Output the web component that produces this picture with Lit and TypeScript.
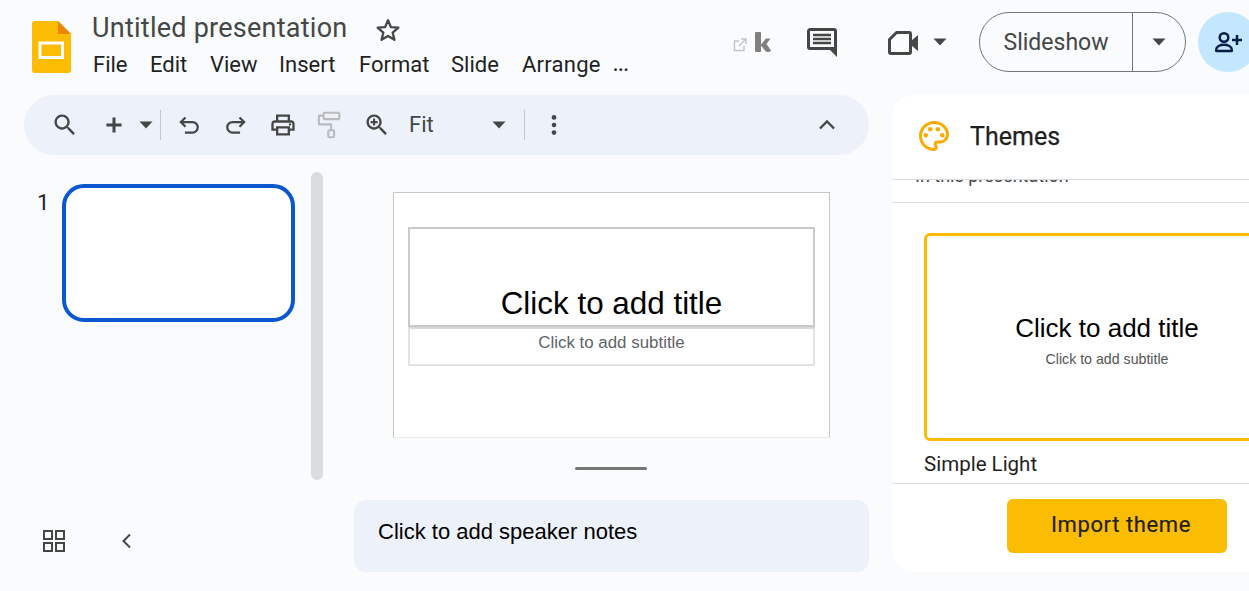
import { LitElement, html, css, svg } from "lit";
import { customElement } from "lit/decorators.js";

const icon = (size: number, content: unknown, vb = "0 0 24 24", cls = "") =>
  html`<svg class="ic ${cls}" width=${size} height=${size} viewBox=${vb} aria-hidden="true">${content}</svg>`;

const SEARCH = "M15.5 14h-.79l-.28-.27C15.41 12.59 16 11.11 16 9.5 16 5.91 13.09 3 9.5 3S3 5.91 3 9.5 5.91 16 9.5 16c1.61 0 3.09-.59 4.23-1.57l.27.28v.79l5 4.99L20.49 19l-4.99-5zm-6 0C7.01 14 5 11.99 5 9.5S7.01 5 9.5 5 14 7.01 14 9.5 11.99 14 9.5 14z";
const PRINT = "M19 8h-1V3H6v5H5c-1.66 0-3 1.34-3 3v6h4v4h12v-4h4v-6c0-1.66-1.34-3-3-3zM8 5h8v3H8V5zm8 12v2H8v-4h8v2zm2-2v-2H6v2H4v-4c0-.55.45-1 1-1h14c.55 0 1 .45 1 1v4h-2z";
const PALETTE = "M12 22C6.49 22 2 17.51 2 12S6.49 2 12 2s10 4.04 10 9c0 3.31-2.69 6-6 6h-1.77c-.28 0-.5.22-.5.5 0 .12.05.23.13.33.41.47.64 1.06.64 1.67 0 1.38-1.12 2.5-2.5 2.5zm0-18c-4.41 0-8 3.59-8 8s3.59 8 8 8c.28 0 .5-.22.5-.5 0-.16-.08-.28-.14-.35-.41-.46-.63-1.05-.63-1.65 0-1.38 1.12-2.5 2.5-2.5H16c2.21 0 4-1.79 4-4 0-3.86-3.59-7-8-7z";

const caret = () => html`<svg class="caret" width="16" height="8" viewBox="0 0 16 8" aria-hidden="true"><path d="M1.5 0.5h13L8 7.5z" fill="#444746"/></svg>`;

@customElement("app-root")
export class AppRoot extends LitElement {
  static styles = css`
    :host { display: block; width: 1249px; height: 591px; overflow: hidden; background: #f9fbfd; font-family: Roboto, "Liberation Sans", sans-serif; color: #1f1f1f; }
    .ic, .caret { display: block; flex-shrink: 0; }

    .header { display: flex; height: 95px; padding-left: 32px; box-sizing: border-box; width: 1249px; overflow: hidden; }
    .logo { margin-top: 21px; flex-shrink: 0; }
    .titles { width: 620px; margin-left: 21px; padding-top: 10px; flex-shrink: 0; }
    .title-row { display: flex; align-items: center; height: 36px; }
    .doc-title { font-size: 27px; color: #444746; line-height: 36px; letter-spacing: 0.25px; }
    .star { margin-left: 27px; margin-top: 4px; }
    .menu { display: flex; margin-top: 4px; height: 30px; align-items: center; font-size: 22px; line-height: 30px; color: #1f1f1f; padding-left: 1px; }
    .menu span { white-space: nowrap; }
    .m-file { width: 57px; } .m-edit { width: 60px; } .m-view { width: 69px; } .m-insert { width: 80px; }
    .m-format { width: 92px; } .m-slide { width: 71px; } .m-arrange { width: 91px; letter-spacing: 0.25px; }
    .m-more { font-weight: 700; font-size: 18px; }

    .cluster { display: flex; align-items: center; height: 60px; margin-top: 12px; flex-shrink: 0; }
    .ext { margin-left: 21px; margin-top: 6px; }
    .k { margin-left: 8px; }
    .comment { margin-left: 36px; margin-top: 2px; }
    .video { margin-left: 51px; margin-top: 2px; }
    .v-caret { margin-left: 14px; }
    .slideshow { display: flex; margin-left: 31px; width: 207px; height: 60px; box-sizing: border-box; border: 1px solid #747775; border-radius: 30px; flex-shrink: 0; }
    .ss-main { width: 153px; display: flex; align-items: center; justify-content: center; border-right: 1px solid #747775; font-size: 23px; color: #444746; box-sizing: border-box; }
    .ss-drop { flex: 1; display: flex; align-items: center; justify-content: center; }
    .avatar { width: 60px; height: 60px; border-radius: 50%; background: #c2e7ff; margin-left: 12px; flex-shrink: 0; display: flex; align-items: center; padding-left: 17px; box-sizing: border-box; }

    .main { display: flex; height: 477px; }
    .left { width: 845px; margin-left: 24px; flex-shrink: 0; }
    .toolbar { display: flex; align-items: center; height: 60px; border-radius: 30px; background: #edf2fa; padding: 0 28px 0 27px; box-sizing: border-box; }
    .t-add { margin-left: 21px; }
    .t-caret1 { margin-left: 10px; }
    .sep { width: 1px; height: 30px; background: #c7c7c7; flex-shrink: 0; }
    .sep1 { margin-left: 6px; }
    .t-undo { margin-left: 14px; }
    .t-tool { margin-left: 19px; }
    .fit { width: 82px; margin-left: 18px; font-size: 22px; color: #444746; box-sizing: border-box; padding-bottom: 2px; }
    .sep2 { margin-left: 17px; }
    .t-dots { margin-left: 15px; }
    .t-collapse { margin-left: auto; }

    .work { display: flex; height: 417px; }
    .strip { display: grid; grid-template-columns: 287px 12px; grid-template-rows: 325px 92px; width: 330px; flex-shrink: 0; }
    .thumbs { display: flex; padding: 29px 0 0 13px; }
    .num { width: 25px; font-size: 22px; line-height: 36px; color: #1f1f1f; margin-top: 1px; }
    .thumb { width: 233px; height: 138px; box-sizing: border-box; background: #fff; border: 4px solid #0b57d0; border-radius: 22px; }
    .scroll { width: 12px; height: 308px; margin-top: 17px; background: #dadce0; border-radius: 6px; }
    .strip-foot { grid-column: 1 / 3; display: flex; align-items: center; padding: 30px 0 0 18px; box-sizing: border-box; height: 92px; gap: 48px; }

    .editor { width: 515px; flex-shrink: 0; }
    .slide { width: 437px; height: 246px; margin: 37px 0 0 39px; box-sizing: border-box; background: #fff; border: 1px solid #c7c7c7; border-bottom-color: #e9eaed; padding: 34px 0 0 14px; font-family: "Liberation Sans", Arial, sans-serif; }
    .ph-title { width: 407px; height: 100px; box-sizing: border-box; border: 2px solid #c9c9c9; text-align: center; font-size: 31.4px; line-height: 38px; color: #000; padding-top: 56px; }
    .ph-sub { width: 407px; height: 39px; box-sizing: border-box; border: 2px solid #e3e3e3; border-top-color: #d9d9d9; text-align: center; font-size: 16.9px; line-height: 26px; color: #5f6368; padding-top: 1px; }
    .handle { width: 72px; height: 3px; background: #747775; border-radius: 2px; margin: 29px 0 0 221px; }
    .notes { height: 72px; margin-top: 30px; background: #edf2fa; border-radius: 12px; padding-left: 24px; display: flex; align-items: center; box-sizing: border-box; font: 22px/32px "Liberation Sans", Arial, sans-serif; color: #000; padding-bottom: 8px; }

    .panel { width: 357px; margin-left: 23px; flex-shrink: 0; background: #fff; border-radius: 22px 0 0 22px; overflow: hidden; display: flex; flex-direction: column; }
    .p-head { height: 85px; box-sizing: border-box; border-bottom: 1px solid #dadce0; display: flex; align-items: center; padding: 0 0 2px 24px; }
    .p-title { font-size: 25px; font-weight: 400; margin-left: 18px; color: #1f1f1f; letter-spacing: 0.05px; -webkit-text-stroke: 0.25px #1f1f1f; }
    .p-section { height: 23px; box-sizing: border-box; border-bottom: 1px solid #dadce0; overflow: hidden; padding-left: 23px; }
    .p-section div { margin-top: -16px; font-size: 18px; line-height: 24px; color: #444746; }
    .p-body { height: 281px; box-sizing: border-box; border-bottom: 1px solid #dadce0; padding: 30px 0 0 32px; overflow: hidden; }
    .card { width: 366px; height: 208px; box-sizing: border-box; border: 3px solid #fbbc04; border-radius: 6px; padding-top: 77px; text-align: center; font-family: "Liberation Sans", Arial, sans-serif; color: #000; }
    .c-title { font-size: 26px; line-height: 30px; }
    .c-sub { font-size: 14.2px; line-height: 20px; margin-top: 6px; color: #555; }
    .label { margin-top: 6px; font-size: 20.5px; line-height: 34px; color: #1f1f1f; }
    .p-foot { display: flex; justify-content: flex-end; padding: 15px 22px 0 0; }
    .import { width: 220px; height: 54px; border-radius: 6px; background: #fbbc04; display: flex; align-items: center; justify-content: center; font-size: 22px; font-weight: 400; color: #1f1f1f; letter-spacing: 0.6px; padding: 0 0 3px 8px; box-sizing: border-box; -webkit-text-stroke: 0.2px #1f1f1f; }
  `;

  render() {
    const dark = "#444746";
    return html`
      <div class="header">
        <svg class="logo" width="39" height="52" viewBox="0 0 39 52" aria-hidden="true">
          <path d="M3 0h23l13 13v36a3 3 0 0 1-3 3H3a3 3 0 0 1-3-3V3a3 3 0 0 1 3-3z" fill="#fbbc04"/>
          <path d="M26 0l13 13H26z" fill="#ea8600"/>
          <rect x="8" y="22" width="22.5" height="14.5" fill="none" stroke="#fff" stroke-width="3"/>
        </svg>
        <div class="titles">
          <div class="title-row">
            <span class="doc-title">Untitled presentation</span>
            ${icon(28, svg`<path d="M12 3.6l2.5 5.9 6.4.5-4.9 4.2 1.5 6.2L12 17.1l-5.5 3.3 1.5-6.2L3.1 10l6.4-.5z" fill="none" stroke="${dark}" stroke-width="2" stroke-linejoin="round"/>`, "0 0 24 24", "star")}
          </div>
          <div class="menu">
            <span class="m-file">File</span><span class="m-edit">Edit</span><span class="m-view">View</span><span class="m-insert">Insert</span><span class="m-format">Format</span><span class="m-slide">Slide</span><span class="m-arrange">Arrange</span><span class="m-more">...</span>
          </div>
        </div>
        <div class="cluster">
          ${icon(14, svg`<path d="M6 3H1.5v9.5H11V8M8 1h5v5M13 1L6 8" fill="none" stroke="#c4c4c4" stroke-width="1.4"/>`, "0 0 14 14", "ext")}
          <svg class="ic k" width="16" height="20" viewBox="0 0 16 20" aria-hidden="true"><rect width="6" height="20" rx="1" fill="#808080"/><path d="M6 12.500L11 6.500H15.500L11.500 12L16 18.500Q15.500 20 12.500 20Q11 20 10 18.500L6 13.500z" fill="#808080"/></svg>
          <svg class="ic comment" width="30" height="30" viewBox="0 0 30 30" aria-hidden="true"><path d="M3 1.500h24a1.500 1.500 0 0 1 1.500 1.500v16a1.500 1.500 0 0 1-1.500 1.500H3A1.500 1.500 0 0 1 1.500 19V3A1.500 1.500 0 0 1 3 1.500z" fill="none" stroke="${dark}" stroke-width="3" stroke-linejoin="round"/><path d="M30 19v10l-8-8z" fill="${dark}"/><path d="M6 7h18M6 11h18M6 15h18" stroke="${dark}" stroke-width="2.600"/></svg>
          <svg class="ic video" width="30" height="24" viewBox="0 0 30 24" aria-hidden="true"><path d="M8.500 1.500h12.500a1.500 1.500 0 0 1 1.500 1.500v18a1.500 1.500 0 0 1-1.500 1.500H3A1.500 1.500 0 0 1 1.500 21V8.500z" fill="none" stroke="${dark}" stroke-width="3" stroke-linejoin="round"/><path d="M23 10l7-6v16l-7-6z" fill="${dark}"/></svg>
          <span class="v-caret">${caret()}</span>
          <div class="slideshow">
            <div class="ss-main">Slideshow</div>
            <div class="ss-drop">${caret()}</div>
          </div>
          <div class="avatar">
            <svg class="ic" width="28" height="22" viewBox="0 0 28 22" aria-hidden="true"><circle cx="9" cy="6.500" r="4.300" fill="none" stroke="#041e49" stroke-width="2.500"/><path d="M1.300 20v-1.800c0-2.600 3.700-4.400 7.700-4.400s7.700 1.800 7.700 4.400V20z" fill="none" stroke="#041e49" stroke-width="2.500" stroke-linejoin="round"/><path d="M22 4v10M17 9h10" stroke="#041e49" stroke-width="2.500"/></svg>
          </div>
        </div>
      </div>
      <div class="main">
        <div class="left">
          <div class="toolbar">
            ${icon(28, svg`<path d="${SEARCH}" fill="${dark}"/>`)}
            ${icon(28, svg`<path d="M12 5.500v13M5.500 12h13" stroke="${dark}" stroke-width="2.600" fill="none"/>`, "0 0 24 24", "t-add")}
            <span class="t-caret1">${caret()}</span>
            <div class="sep sep1"></div>
            ${icon(28, svg`<path d="M9 5.500L5 9.500l4 4M5.500 9.500H15a4.500 4.500 0 0 1 0 9H8.500" fill="none" stroke="${dark}" stroke-width="1.900"/>`, "0 0 24 24", "t-undo")}
            ${icon(28, svg`<path d="M15 5.500l4 4-4 4M18.500 9.500H9a4.500 4.500 0 0 0 0 9h6.500" fill="none" stroke="${dark}" stroke-width="1.900"/>`, "0 0 24 24", "t-tool")}
            ${icon(28, svg`<path d="${PRINT}" fill="${dark}"/><circle cx="18" cy="11.500" r="1" fill="${dark}"/>`, "0 0 24 24", "t-tool")}
            ${icon(28, svg`<g fill="none" stroke="#b9bbbd" stroke-width="1.800" stroke-linejoin="round"><rect x="6.500" y="1.500" width="13.500" height="5.500" rx="1"/><path d="M6.500 4H2.500v7.500H13v5"/><rect x="10.500" y="16.500" width="5" height="6" rx="1"/></g>`, "0 0 24 24", "t-tool")}
            ${icon(28, svg`<path d="${SEARCH}" fill="${dark}"/><path d="M9.500 6.500v6M6.500 9.500h6" stroke="${dark}" stroke-width="1.800"/>`, "0 0 24 24", "t-tool")}
            <div class="fit">Fit</div>
            ${caret()}
            <div class="sep sep2"></div>
            ${icon(28, svg`<circle cx="12" cy="5.500" r="2" fill="${dark}"/><circle cx="12" cy="12" r="2" fill="${dark}"/><circle cx="12" cy="18.500" r="2" fill="${dark}"/>`, "0 0 24 24", "t-dots")}
            ${icon(28, svg`<path d="M6 15l6-6 6 6" fill="none" stroke="${dark}" stroke-width="2"/>`, "0 0 24 24", "t-collapse")}
          </div>
          <div class="work">
            <div class="strip">
              <div class="thumbs"><div class="num">1</div><div class="thumb"></div></div>
              <div class="scroll"></div>
              <div class="strip-foot">
                ${icon(24, svg`<g fill="none" stroke="${dark}" stroke-width="2"><rect x="2" y="2" width="8" height="8"/><rect x="14" y="2" width="8" height="8"/><rect x="2" y="14" width="8" height="8"/><rect x="14" y="14" width="8" height="8"/></g>`)}
                ${icon(24, svg`<path d="M16 5.500L9.500 12l6.500 6.500" fill="none" stroke="${dark}" stroke-width="2"/>`)}
              </div>
            </div>
            <div class="editor">
              <div class="slide">
                <div class="ph-title">Click to add title</div>
                <div class="ph-sub">Click to add subtitle</div>
              </div>
              <div class="handle"></div>
              <div class="notes">Click to add speaker notes</div>
            </div>
          </div>
        </div>
        <div class="panel">
          <div class="p-head">
            ${icon(36, svg`<path d="${PALETTE}" fill="#f9ab00"/><circle cx="6.500" cy="11.500" r="1.500" fill="#f9ab00"/><circle cx="9.500" cy="7.500" r="1.500" fill="#f9ab00"/><circle cx="14.500" cy="7.500" r="1.500" fill="#f9ab00"/><circle cx="17.500" cy="11.500" r="1.500" fill="#f9ab00"/>`)}
            <span class="p-title">Themes</span>
          </div>
          <div class="p-section"><div>In this presentation</div></div>
          <div class="p-body">
            <div class="card">
              <div class="c-title">Click to add title</div>
              <div class="c-sub">Click to add subtitle</div>
            </div>
            <div class="label">Simple Light</div>
          </div>
          <div class="p-foot"><div class="import">Import theme</div></div>
        </div>
      </div>
    `;
  }
}
